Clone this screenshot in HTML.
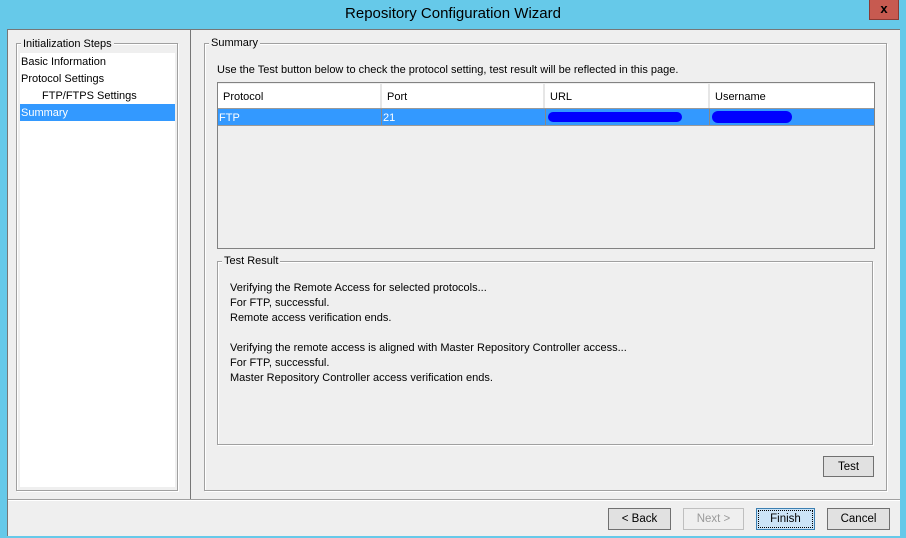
<!DOCTYPE html>
<html><head><style>
*{margin:0;padding:0;box-sizing:border-box}
body{width:906px;height:538px;background:#66c9e9;font-family:"Liberation Sans",Arial,sans-serif;font-size:11px;color:#000;position:relative;overflow:hidden}
.a{position:absolute}
.title{left:0;top:5px;width:906px;text-align:center;font-size:15px;color:#000}
.close{left:869px;top:0;width:30px;height:20px;background:#c75a50;border:1px solid #8a3a34;border-top:none;color:#000;font-weight:bold;text-align:center;font-size:13px;line-height:18px}
.win{left:7px;top:29px;width:893px;height:507px;background:#efefef;border-top:1px solid #777;border-left:1px solid #777}
.grp{border:1px solid #a0a0a0;box-shadow:1px 1px 0 #fff inset,1px 1px 0 #fff}
.lg{background:#efefef;padding:0 2px}
.btn{border:1px solid #707070;background:#e1e1e1;text-align:center;line-height:21px;font-size:11.5px}
.th{top:84px;height:24px;background:#fff;border-right:2px solid #e6e6e6;padding:7px 5px;line-height:12px}
</style></head><body>
<div class="a title">Repository Configuration Wizard</div>
<div class="a close">x</div>
<div class="a win"></div>
<div class="a" style="left:190px;top:30px;width:1px;height:469px;background:#777"></div>
<div class="a" style="left:8px;top:499px;width:892px;height:2px;border-top:1px solid #a0a0a0;border-bottom:1px solid #fff"></div>
<!-- left -->
<div class="a grp" style="left:16px;top:43px;width:162px;height:448px"></div>
<div class="a" style="left:20px;top:53px;width:155px;height:434px;background:#fff"></div>
<div class="a lg" style="left:21px;top:38px">Initialization Steps</div>
<div class="a" style="left:21px;top:56px">Basic Information</div>
<div class="a" style="left:21px;top:73px">Protocol Settings</div>
<div class="a" style="left:42px;top:90px">FTP/FTPS Settings</div>
<div class="a" style="left:20px;top:104px;width:155px;height:17px;background:#3399ff;color:#fff;padding:3px 1px">Summary</div>
<!-- right -->
<div class="a grp" style="left:204px;top:43px;width:683px;height:448px"></div>
<div class="a lg" style="left:209px;top:37px">Summary</div>
<div class="a" style="left:217px;top:64px">Use the Test button below to check the protocol setting, test result will be reflected in this page.</div>
<div class="a" style="left:217px;top:82px;width:658px;height:167px;border:1px solid #828282;background:#efefef"></div>
<div class="a th" style="left:218px;width:164px">Protocol</div>
<div class="a th" style="left:382px;width:163px">Port</div>
<div class="a th" style="left:545px;width:165px">URL</div>
<div class="a th" style="left:710px;width:164px;border-right:none">Username</div>
<div class="a" style="left:218px;top:108px;width:656px;height:18px;background:#3399ff;border-top:1px solid #999;border-bottom:1px solid #999"></div>
<div class="a" style="left:219px;top:112px;color:#fff">FTP</div>
<div class="a" style="left:383px;top:112px;color:#fff">21</div>
<div class="a" style="left:381px;top:109px;width:1px;height:16px;background:#888"></div>
<div class="a" style="left:545px;top:109px;width:1px;height:16px;background:#888"></div>
<div class="a" style="left:709px;top:109px;width:1px;height:16px;background:#888"></div>
<div class="a" style="left:548px;top:112px;width:134px;height:10px;background:#0000ff;border-radius:5px"></div>
<div class="a" style="left:712px;top:111px;width:80px;height:12px;background:#0000ff;border-radius:6px"></div>
<div class="a grp" style="left:217px;top:261px;width:656px;height:184px"></div>
<div class="a lg" style="left:222px;top:255px">Test Result</div>
<div class="a" style="left:230px;top:281px;line-height:15px">Verifying the Remote Access for selected protocols...<br>For FTP, successful.<br>Remote access verification ends.<br><br>Verifying the remote access is aligned with Master Repository Controller access...<br>For FTP, successful.<br>Master Repository Controller access verification ends.</div>
<div class="a btn" style="left:823px;top:456px;width:51px;height:21px;line-height:20px">Test</div>
<div class="a btn" style="left:608px;top:508px;width:63px;height:22px">&lt; Back</div>
<div class="a btn" style="left:683px;top:508px;width:61px;height:22px;border-color:#bfbfbf;background:#efefef;color:#9a9a9a">Next &gt;</div>
<div class="a btn" style="left:756px;top:508px;width:59px;height:22px;border-color:#3c7fb1;background:#cce4f7;outline:1px dotted #000;outline-offset:-3px">Finish</div>
<div class="a btn" style="left:827px;top:508px;width:63px;height:22px">Cancel</div>
</body></html>
